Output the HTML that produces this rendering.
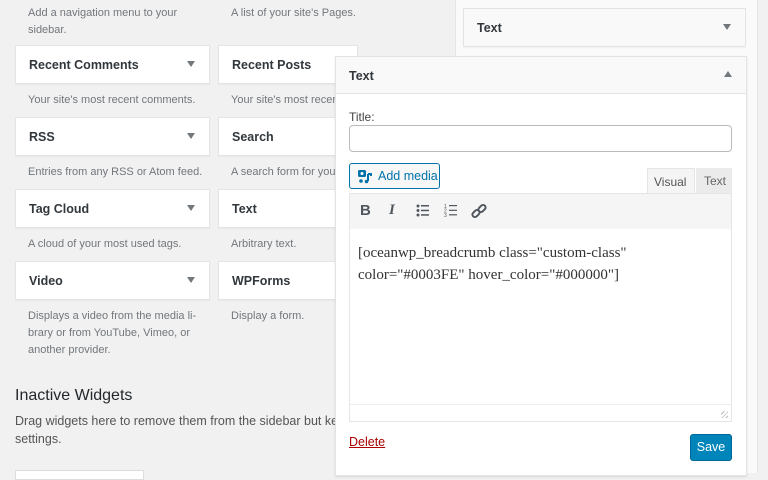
<!DOCTYPE html>
<html><head><style>
*{box-sizing:border-box;margin:0;padding:0}
body{width:768px;height:473px;overflow:hidden;background:#f1f1f1;font-family:"Liberation Sans",sans-serif;position:relative;color:#23282d}
.a{position:absolute}
.w{position:absolute;background:#fff;border:1px solid #e2e4e7;box-shadow:0 1px 1px rgba(0,0,0,.04);height:39px;font-size:12.5px;font-weight:bold;padding:12px 0 0 13px;color:#32373c}
.w .ar{position:absolute;right:14px;top:15px;width:0;height:0;border-left:4px solid transparent;border-right:4px solid transparent;border-top:6px solid #72777c}
.d{position:absolute;font-size:11px;color:#72777c;line-height:17px}
</style></head><body>
<div class="d" style="left:28px;top:5px">Add a navigation menu to your<br>sidebar.</div>
<div class="d" style="left:231px;top:5px">A list of your site's Pages.</div>

<div class="w" style="left:15px;top:45px;width:195px">Recent Comments<span class="ar"></span></div>
<div class="w" style="left:218px;top:45px;width:140px">Recent Posts</div>
<div class="d" style="left:28px;top:92px">Your site's most recent comments.</div>
<div class="d" style="left:231px;top:92px">Your site's most recent</div>

<div class="w" style="left:15px;top:117px;width:195px">RSS<span class="ar"></span></div>
<div class="w" style="left:218px;top:117px;width:140px">Search</div>
<div class="d" style="left:28px;top:164px">Entries from any RSS or Atom feed.</div>
<div class="d" style="left:231px;top:164px">A search form for your</div>

<div class="w" style="left:15px;top:189px;width:195px">Tag Cloud<span class="ar"></span></div>
<div class="w" style="left:218px;top:189px;width:140px">Text</div>
<div class="d" style="left:28px;top:236px">A cloud of your most used tags.</div>
<div class="d" style="left:231px;top:236px">Arbitrary text.</div>

<div class="w" style="left:15px;top:261px;width:195px">Video<span class="ar"></span></div>
<div class="w" style="left:218px;top:261px;width:140px">WPForms</div>
<div class="d" style="left:28px;top:308px">Displays a video from the media li-<br>brary or from YouTube, Vimeo, or<br>another provider.</div>
<div class="d" style="left:231px;top:308px">Display a form.</div>

<div class="a" style="left:15px;top:387px;font-size:16px;color:#23282d">Inactive Widgets</div>
<div class="a" style="left:15px;top:412px;font-size:12.5px;color:#555;line-height:18px;width:330px;white-space:nowrap">Drag widgets here to remove them from the sidebar but keep their<br>settings.</div>
<div class="a" style="left:15px;top:470px;width:129px;height:10px;background:#fff;border:1px solid #ddd"></div>

<div class="a" style="left:455px;top:0;width:303px;height:473px;background:#fafafa;border-left:1px solid #e5e5e5;border-right:1px solid #e5e5e5"></div>
<div class="w" style="left:463px;top:8px;width:283px;background:#f9f9f9">Text<span class="ar"></span></div>

<div class="a" style="left:335px;top:56px;width:412px;height:420px;background:#fff;border:1px solid #e2e4e7;box-shadow:0 1px 2px rgba(0,0,0,.1)"></div>
<div class="a" style="left:336px;top:57px;width:410px;height:37px;background:#f9f9f9;border-bottom:1px solid #e2e4e7;font-size:12.5px;font-weight:bold;padding:12px 0 0 13px;color:#32373c">Text<span class="a" style="right:14px;top:14px;border-left:4px solid transparent;border-right:4px solid transparent;border-bottom:6px solid #72777c"></span></div>
<div class="a" style="left:349px;top:110px;font-size:12px;color:#444">Title:</div>
<div class="a" style="left:349px;top:125px;width:383px;height:27px;border:1px solid #bbb;border-radius:4px;background:#fff"></div>
<div class="a" style="left:349px;top:163px;width:91px;height:26px;border:1px solid #0073aa;border-radius:3px;background:#f7f7f7;color:#0073aa;font-size:12.5px;padding:5px 0 0 28px">Add media
<svg class="a" style="left:7px;top:5px" width="16" height="15" viewBox="0 0 16 15"><rect x="1" y="1" width="8" height="7" rx="1.5" fill="#0073aa"/><circle cx="5" cy="4.5" r="1.5" fill="#fff"/><path d="M11 5v7M11 5h3v2" stroke="#0073aa" stroke-width="2" fill="none"/><circle cx="9.5" cy="12.5" r="1.8" fill="#0073aa"/><circle cx="4" cy="12" r="1.8" fill="#0073aa"/></svg></div>
<div class="a" style="left:647px;top:168px;width:48px;height:26px;background:#f5f5f5;border:1px solid #e5e5e5;border-bottom:none;font-size:12px;color:#555;padding:6px 0 0 6px">Visual</div>
<div class="a" style="left:696px;top:168px;width:36px;height:25px;background:#ebebeb;font-size:12px;color:#666;padding:6px 0 0 8px">Text</div>
<div class="a" style="left:349px;top:193px;width:383px;height:37px;background:#f5f5f5;border:1px solid #e5e5e5;border-bottom:1px solid #ddd"></div>
<div class="a" style="left:360px;top:202px;font-size:15px;font-weight:bold;color:#50575e">B</div>
<div class="a" style="left:389px;top:202px;font-size:15px;font-style:italic;font-family:'Liberation Serif',serif;font-weight:bold;color:#50575e">I</div>
<svg class="a" style="left:416px;top:204px" width="14" height="13"><g fill="#50575e"><circle cx="2" cy="2" r="1.5"/><circle cx="2" cy="6.5" r="1.5"/><circle cx="2" cy="11" r="1.5"/><rect x="5" y="1" width="8" height="1.5"/><rect x="5" y="5.7" width="8" height="1.5"/><rect x="5" y="10.2" width="8" height="1.5"/></g></svg>
<svg class="a" style="left:444px;top:204px" width="14" height="13"><g fill="#50575e" font-size="5" font-family="Liberation Sans"><text x="0" y="4">1</text><text x="0" y="8.5">2</text><text x="0" y="13">3</text><rect x="5" y="1" width="8" height="1.2"/><rect x="5" y="5.7" width="8" height="1.2"/><rect x="5" y="10.2" width="8" height="1.2"/></g></svg>
<svg class="a" style="left:471px;top:203px" width="16" height="16" viewBox="0 0 16 16"><g stroke="#50575e" stroke-width="2" fill="none"><rect x="1" y="8" width="8" height="5" rx="2.5" transform="rotate(-45 5 10.5)"/><rect x="7" y="3" width="8" height="5" rx="2.5" transform="rotate(-45 11 5.5)"/></g></svg>
<div class="a" style="left:349px;top:229px;width:383px;height:193px;border:1px solid #e5e5e5;border-top:none;background:#fff"></div>
<div class="a" style="left:350px;top:404px;width:381px;height:1px;background:#eee"></div>
<div class="a" style="left:358px;top:242px;font-family:'Liberation Serif','DejaVu Serif',serif;font-size:15px;line-height:22px;color:#333;white-space:nowrap">[oceanwp_breadcrumb class="custom-class"<br>color="#0003FE" hover_color="#000000"]</div>
<div class="a" style="left:721px;top:411px;width:7px;height:7px;background:repeating-linear-gradient(135deg,transparent 0 2px,#bbb 2px 3px)"></div>
<div class="a" style="left:349px;top:435px;font-size:12.5px;color:#a00;text-decoration:underline">Delete</div>
<div class="a" style="left:690px;top:434px;width:42px;height:27px;background:#0085ba;border:1px solid #006799;border-radius:3px;color:#fff;font-size:12.5px;line-height:25px;text-align:center">Save</div>
</body></html>
